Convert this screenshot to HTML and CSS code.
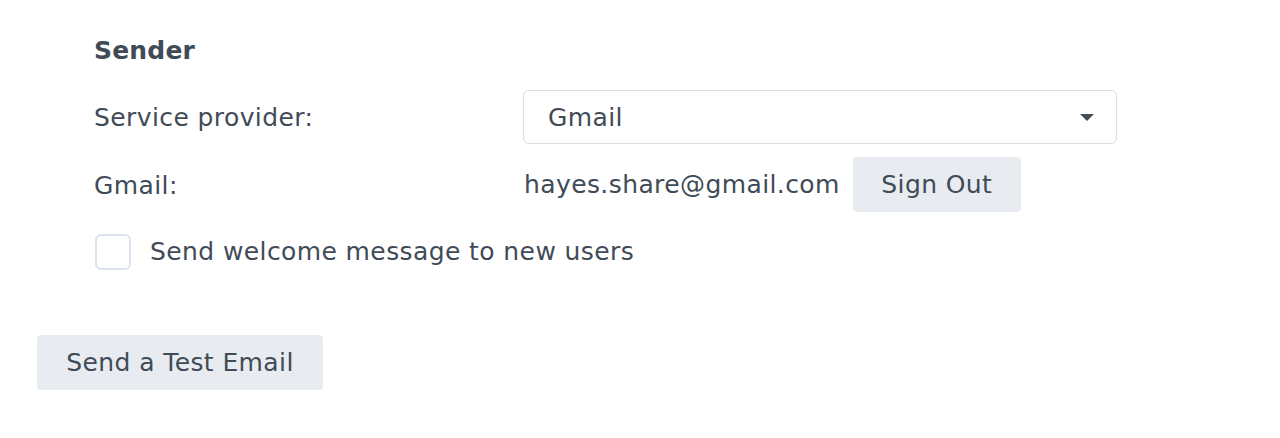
FILE: index.html
```html
<!DOCTYPE HTML>
<html>
    <head>
        <title>Notification: Email</title>
        <meta charset="utf-8">
        <link rel="stylesheet" href="styles.css">
    </head>
    <body>
        <div class="sender">
            <div class="section-title">Sender</div>
            <div class="form-row">
                <div class="form-label">Service provider:</div>
                <div class="select-box">
                    <span class="select-value">Gmail</span>
                    <span class="select-arrow"></span>
                </div>
            </div>
            <div class="form-row">
                <div class="form-label">Gmail:</div>
                <div class="account">
                    <span>hayes.share@gmail.com</span>
                    <button class="btn btn-signout">Sign Out</button>
                </div>
            </div>
            <label class="check-row">
                <span class="checkbox"></span>
                <span>Send welcome message to new users</span>
            </label>
        </div>
        <div class="footer">
            <button class="btn btn-test">Send a Test Email</button>
        </div>
    </body>
</html>
```

FILE: styles.css
```css
*
{
    box-sizing: border-box;
}
body
{
    margin: 0px;
    padding: 0px;
    background: #ffffff;
    color: #414b57;
    font-family: "DejaVu Sans", Verdana, sans-serif;
    font-size: 25px;
    line-height: 30px;
    letter-spacing: 0.4px;
}
.sender
{
    padding: 36px 0 0 94px;
    display: flex;
    flex-direction: column;
}
.section-title
{
    font-weight: bold;
    letter-spacing: 0.2px;
    margin-bottom: 24px;
}
.form-row
{
    display: flex;
    align-items: center;
    margin-bottom: 13px;
}
.form-label
{
    width: 429px;
    flex: none;
    padding-top: 2px;
}
.select-box
{
    width: 594px;
    height: 54px;
    border: 1px solid #d6dee7;
    border-radius: 6px;
    padding: 0 22px 0 24px;
    display: flex;
    align-items: center;
    justify-content: space-between;
}
.select-value
{
    padding-top: 2px;
}
.select-arrow
{
    width: 0;
    height: 0;
    border-left: 7px solid transparent;
    border-right: 7px solid transparent;
    border-top: 7px solid #444c56;
}
.account
{
    display: flex;
    align-items: center;
    gap: 13px;
    padding-left: 1px;
}
.btn
{
    font: inherit;
    color: inherit;
    letter-spacing: inherit;
    background: #e8ecf1;
    border: none;
    border-radius: 4px;
    height: 55px;
    padding: 0;
}
.btn-signout
{
    width: 168px;
}
.check-row
{
    display: flex;
    align-items: center;
    gap: 19px;
    margin-top: 9px;
    padding-left: 1px;
}
.checkbox
{
    width: 36px;
    height: 36px;
    border: 2px solid #dbe4ee;
    border-radius: 6px;
}
.footer
{
    padding: 65px 0 0 37px;
}
.btn-test
{
    width: 286px;
    height: 55px;
}
```
